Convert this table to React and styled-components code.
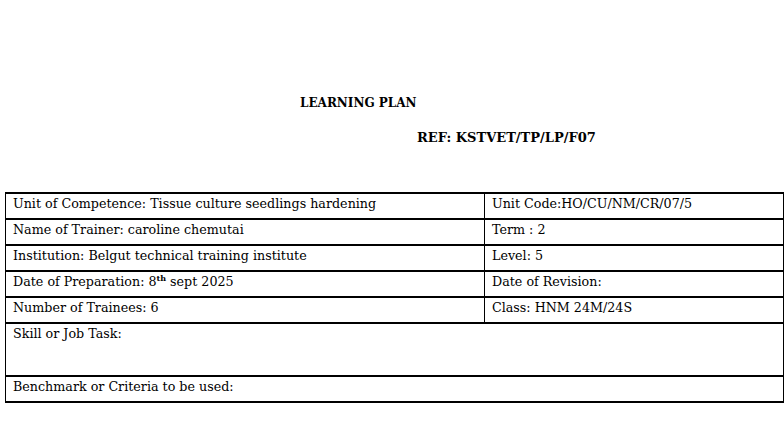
import React from 'react'
import styled, { createGlobalStyle } from 'styled-components';

const GlobalStyle = createGlobalStyle`
  html, body {
    margin: 0;
    padding: 0;
    background: #ffffff;
  }
  body {
    font-family: "DejaVu Serif", "Liberation Serif", serif;
    color: #000000;
  }
`;

const rows = [
    { left: 'Unit of Competence: Tissue culture seedlings hardening', right: 'Unit Code:HO/CU/NM/CR/07/5' },
    { left: 'Name of Trainer: caroline chemutai', right: 'Term : 2' },
    { left: 'Institution: Belgut technical training institute', right: 'Level: 5' },
    { left: <>Date of Preparation: 8<sup>th</sup> sept 2025</>, right: 'Date of Revision:' },
    { left: 'Number of Trainees: 6', right: 'Class: HNM 24M/24S' },
];

function LearningPlan() {
    return (
        <>
            <GlobalStyle />
            <StyledPage>
                <StyledHeading>
                    <h1>LEARNING PLAN</h1>
                    <h2>REF: KSTVET/TP/LP/F07</h2>
                </StyledHeading>
                <StyledTable>
                    <colgroup>
                        <col style={{ width: '479px' }} />
                        <col />
                    </colgroup>
                    <tbody>
                        {rows.map((row, i) => (
                            <tr key={i}>
                                <Cell>{row.left}</Cell>
                                <Cell>{row.right}</Cell>
                            </tr>
                        ))}
                        <tr>
                            <Cell colSpan={2} $tall>Skill or Job Task:</Cell>
                        </tr>
                        <tr>
                            <Cell colSpan={2}>Benchmark or Criteria to be used:</Cell>
                        </tr>
                    </tbody>
                </StyledTable>
            </StyledPage>
        </>
    )
}

const StyledPage = styled.div`
  width: 784px;
  height: 441px;
  padding: 93px 0 0 5px;
  box-sizing: border-box;
  overflow: hidden;
`;

const StyledHeading = styled.div`
  height: 99px;
  h1, h2 {
    margin: 0;
    font-weight: bold;
    line-height: 18px;
  }
  h1 {
    padding-left: 295px;
    padding-top: 1px;
    font-size: 12px;
  }
  h2 {
    margin-top: 17px;
    padding-left: 412px;
    font-size: 13px;
  }
`;

const StyledTable = styled.table`
  width: 779px;
  border-collapse: collapse;
  table-layout: fixed;
  border: 1.5px solid #000;
`;

const Cell = styled.td`
  border: 1.5px solid #000;
  border-width: 2px 1.5px;
  padding: 1px 7px 1px;
  height: ${p => p.$tall ? '49px' : '22px'};
  vertical-align: top;
  font-size: 12.7px;
  line-height: 17px;
  white-space: nowrap;
  sup {
    font-size: 8px;
    line-height: 0;
    vertical-align: 5px;
    font-weight: bold;
  }
`;

export default LearningPlan;
